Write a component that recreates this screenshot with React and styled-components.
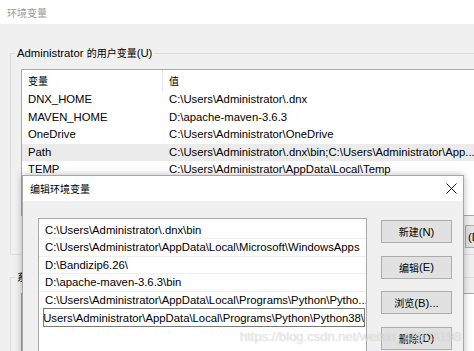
import React from 'react';
import styled, { createGlobalStyle } from 'styled-components';

const GlobalStyle = createGlobalStyle`
  html, body {
    margin: 0;
    padding: 0;
    width: 474px;
    height: 351px;
    overflow: hidden;
    background: #f0f0f0;
  }
  body {
    font-family: "Liberation Sans", "Noto Sans CJK SC", sans-serif;
    font-size: 11.3px;
    color: #000;
  }
`;

const Zh = styled.span`
  font-family: "Noto Sans CJK SC", sans-serif;
  font-size: 10px;
`;

const Screen = styled.div`
  position: relative;
  width: 474px;
  height: 351px;
  overflow: hidden;
`;

// background window (环境变量)
const BgWindow = styled.div`
  display: flex;
  flex-direction: column;
  height: 100%;
  background: #f0f0f0;
`;

const BgTitle = styled.div`
  height: 24px;
  flex: none;
  background: #fff;
  display: flex;
  align-items: center;
  padding-left: 7px;
  color: #9a9a9a;
`;

const BgBody = styled.div`
  padding: 21px 0 0 10px;
`;

const Group = styled.fieldset`
  margin: ${p => p.$top || 0}px 0 0 0;
  padding: 0;
  border: 1px solid #dcdcdc;
  border-right: none;
  min-width: 0;
`;

const Legend = styled.legend`
  margin-left: 4px;
  padding: 0 2px;
  line-height: 15px;
  color: #000;
`;

const ListView = styled.div`
  margin: 8px 0 0 10px;
  height: ${p => p.$height}px;
  box-sizing: border-box;
  border: 1px solid #a9a9a9;
  border-right: none;
  background: #fff;
  overflow: hidden;
`;

const HeaderRow = styled.div`
  display: flex;
  height: 21px;
  align-items: center;
`;

const HeadCell = styled.div`
  box-sizing: border-box;
  width: ${p => (p.$first ? '141px' : 'auto')};
  flex: ${p => (p.$first ? 'none' : '1')};
  height: 100%;
  display: flex;
  align-items: center;
  padding-left: 6px;
  border-right: ${p => (p.$first ? '1px solid #e5e5e5' : 'none')};
`;

const Row = styled.div`
  display: flex;
  height: 17.5px;
  line-height: 17.5px;
  background: ${p => (p.$selected ? '#ebebeb' : 'transparent')};
  white-space: nowrap;
`;

const NameCell = styled.div`
  box-sizing: border-box;
  width: 141px;
  flex: none;
  padding-left: 6px;
  overflow: hidden;
`;

const ValueCell = styled.div`
  flex: 1;
  padding-left: 6px;
  overflow: hidden;
`;

const BgButtons = styled.div`
  display: flex;
  justify-content: flex-end;
  gap: 9px;
  margin: 9px -66px 6px 0;
`;

const BgButton = styled.div`
  width: 75px;
  height: 23px;
  box-sizing: border-box;
  border: 1px solid #adadad;
  background: #e1e1e1;
  display: flex;
  align-items: center;
  justify-content: flex-start;
  padding-left: 2px;
  overflow: hidden;
  white-space: nowrap;
`;

// foreground dialog (编辑环境变量)
const Dialog = styled.div`
  position: absolute;
  left: 22px;
  top: 175px;
  width: 442px;
  height: 200px;
  box-sizing: border-box;
  border: 1px solid #a6a6a6;
  box-shadow: 0 0 7px rgba(0, 0, 0, 0.28);
  display: flex;
  flex-direction: column;
  background: #f0f0f0;
`;

const DialogTitle = styled.div`
  height: 25px;
  flex: none;
  background: #fff;
  display: flex;
  align-items: center;
  justify-content: space-between;
  padding: 0 6px 0 7px;
`;

const DialogBody = styled.div`
  display: flex;
  gap: 14px;
  padding: 17px 0 0 15px;
  flex: 1;
`;

const PathList = styled.div`
  width: 329px;
  flex: none;
  box-sizing: border-box;
  border: 1px solid #a9a9a9;
  border-bottom: none;
  background: #fff;
  padding-top: 2.5px;
`;

const PathRow = styled.div`
  height: 17.5px;
  line-height: 17px;
  box-sizing: border-box;
  border-bottom: 1px solid #efefef;
  padding-left: 6px;
  white-space: nowrap;
  overflow: hidden;
`;

const PathEdit = styled.div`
  height: 19px;
  margin: -1px 1px 0 4px;
  box-sizing: border-box;
  border: 1px solid #7a7a7a;
  display: flex;
  justify-content: flex-end;
  align-items: center;
  overflow: hidden;
  white-space: nowrap;
`;

const ButtonColumn = styled.div`
  display: flex;
  flex-direction: column;
  gap: 12.5px;
  margin-top: 2px;
`;

const Button = styled.div`
  width: 71px;
  height: 23px;
  box-sizing: border-box;
  border: 1px solid #adadad;
  background: #e1e1e1;
  display: flex;
  align-items: center;
  justify-content: center;
`;

const Watermark = styled.div`
  position: absolute;
  left: 240px;
  top: 329px;
  font-family: "Liberation Sans", sans-serif;
  font-size: 13px;
  color: rgba(255, 255, 255, 0.55);
  text-shadow: 0 0 1px rgba(120, 120, 120, 0.45);
  white-space: nowrap;
  pointer-events: none;
`;

const CloseIcon = () => (
  <svg width="11" height="11" viewBox="0 0 11 11">
    <path d="M0.5 0.5 L10.5 10.5 M10.5 0.5 L0.5 10.5" stroke="#111" strokeWidth="1" />
  </svg>
);

const userVars = [
  ['DNX_HOME', 'C:\\Users\\Administrator\\.dnx'],
  ['MAVEN_HOME', 'D:\\apache-maven-3.6.3'],
  ['OneDrive', 'C:\\Users\\Administrator\\OneDrive'],
  ['Path', 'C:\\Users\\Administrator\\.dnx\\bin;C:\\Users\\Administrator\\App...'],
  ['TEMP', 'C:\\Users\\Administrator\\AppData\\Local\\Temp'],
  ['TMP', 'C:\\Users\\Administrator\\AppData\\Local\\Temp'],
];

const paths = [
  'C:\\Users\\Administrator\\.dnx\\bin',
  'C:\\Users\\Administrator\\AppData\\Local\\Microsoft\\WindowsApps',
  'D:\\Bandizip6.26\\',
  'D:\\apache-maven-3.6.3\\bin',
  'C:\\Users\\Administrator\\AppData\\Local\\Programs\\Python\\Pytho...',
];

const App = () => (
  <Screen>
    <GlobalStyle />
    <BgWindow>
      <BgTitle><Zh>环境变量</Zh></BgTitle>
      <BgBody>
        <Group>
          <Legend>Administrator <Zh>的用户变量</Zh>(U)</Legend>
          <ListView $height={147}>
            <HeaderRow>
              <HeadCell $first><Zh>变量</Zh></HeadCell>
              <HeadCell><Zh>值</Zh></HeadCell>
            </HeaderRow>
            {userVars.map(([name, value]) => (
              <Row key={name} $selected={name === 'Path'}>
                <NameCell>{name}</NameCell>
                <ValueCell>{value}</ValueCell>
              </Row>
            ))}
          </ListView>
          <BgButtons>
            <BgButton><Zh>新建</Zh>(N)...</BgButton>
            <BgButton><Zh>编辑</Zh>(E)...</BgButton>
            <BgButton>(D)</BgButton>
          </BgButtons>
        </Group>
        <Group $top={14}>
          <Legend><Zh>系统变量</Zh>(S)</Legend>
          <ListView $height={80} />
        </Group>
      </BgBody>
    </BgWindow>

    <Dialog>
      <DialogTitle>
        <Zh>编辑环境变量</Zh>
        <CloseIcon />
      </DialogTitle>
      <DialogBody>
        <PathList>
          {paths.map(p => (
            <PathRow key={p}>{p}</PathRow>
          ))}
          <PathEdit>
            C:\Users\Administrator\AppData\Local\Programs\Python\Python38\
          </PathEdit>
        </PathList>
        <ButtonColumn>
          <Button><Zh>新建</Zh>(N)</Button>
          <Button><Zh>编辑</Zh>(E)</Button>
          <Button><Zh>浏览</Zh>(B)...</Button>
          <Button><Zh>删除</Zh>(D)</Button>
        </ButtonColumn>
      </DialogBody>
    </Dialog>

    <Watermark>https://blog.csdn.net/weixin_43803198</Watermark>
  </Screen>
);

export default App;
